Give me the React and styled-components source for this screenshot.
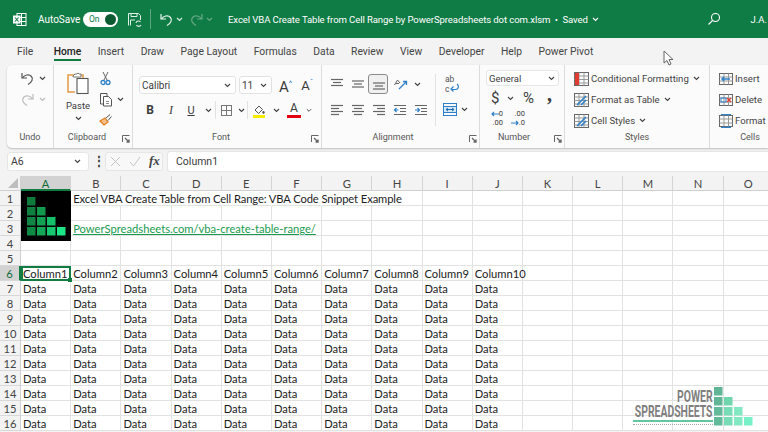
import React from 'react'
import styled, { createGlobalStyle } from 'styled-components'

const GlobalStyle = createGlobalStyle`
   html, body {
      margin: 0;
      background: #f3f3f3;
   }
`

const uiFont = `Roboto, "Open Sans", sans-serif`
const cellFont = `Lato, "Liberation Sans", sans-serif`

const columns = ['A', 'B', 'C', 'D', 'E', 'F', 'G', 'H', 'I', 'J', 'K', 'L', 'M', 'N', 'O']
const tabs = ['File', 'Home', 'Insert', 'Draw', 'Page Layout', 'Formulas', 'Data', 'Review', 'View', 'Developer', 'Help', 'Power Pivot']

const Icon = ({ w = 14, h = 14, children, stroke = '#555', ...rest }) => (
   <svg width={w} height={h} viewBox={`0 0 ${w} ${h}`} fill="none" stroke={stroke} strokeWidth="1" {...rest}>
      {children}
   </svg>
)

const Chevron = ({ color = '#444' }) => (
   <svg width="7" height="5" viewBox="0 0 7 5" fill="none" stroke={color} strokeWidth="1.1">
      <path d="M1 1l2.5 2.5L6 1" />
   </svg>
)

const Launcher = () => (
   <LauncherBox>
      <Icon w={8} h={8} stroke="#666">
         <path d="M.5 7V.5H7.5" />
         <path d="M3 3l4 4M7 4.5V7H4.5" strokeWidth="1.4" />
      </Icon>
   </LauncherBox>
)

const Undo = ({ color = '#555' }) => (
   <Icon w={15} h={15} stroke={color} strokeWidth="1.2">
      <path d="M2 2v5h5" />
      <path d="M2.5 7C4 4 9 2.5 11.5 5.5 13.5 8 12 11 8 13.5" />
   </Icon>
)

const Redo = ({ color = '#bbb' }) => (
   <Icon w={15} h={15} stroke={color} strokeWidth="1.2">
      <path d="M13 2v5H8" />
      <path d="M12.5 7C11 4 6 2.5 3.5 5.5 1.5 8 3 11 7 13.5" />
   </Icon>
)

const Lines = ({ pattern }) => (
   <Icon w={14} h={12} stroke="#666" strokeWidth="1.2">
      {pattern.map(([x1, x2, y]) => (
         <path key={y} d={`M${x1} ${y}H${x2}`} />
      ))}
   </Icon>
)

const ExcelLogo = () => (
   <Icon w={15} h={15} stroke="#fff">
      <rect x="5" y="1.5" width="9" height="12" />
      <path d="M5 5.5h9M5 9.5h9M9.5 1.5v12" />
      <rect x="1" y="3.5" width="7.5" height="8" fill="#fff" stroke="none" />
      <path d="M3 5.5l3.5 4M6.5 5.5L3 9.5" stroke="#107c41" strokeWidth="1.1" />
   </Icon>
)

const SaveIcon = () => (
   <Icon w={15} h={15} stroke="#dff0e6">
      <path d="M1.5 13.5v-12h10l2 2V8" />
      <path d="M4 1.5v3h6v-3M3.5 13.5V8H8" />
      <path d="M9 11a2.5 2.5 0 0 1 4.5-1M14 13a2.5 2.5 0 0 1-4.5 0" strokeWidth="1.1" />
   </Icon>
)

const PasteIcon = () => (
   <Icon w={24} h={25} stroke="#e59a45" strokeWidth="1.5">
      <path d="M8 4H2v17h7" />
      <path d="M15 4h2v3" />
      <path d="M7 5l2-2h1.5a2 2 0 0 1 3 0H15v3H7z" stroke="#777" strokeWidth="1" fill="#fff" />
      <rect x="11" y="7.5" width="11" height="15" fill="#fff" stroke="#555" strokeWidth="1.1" />
   </Icon>
)

const CutIcon = () => (
   <Icon w={11} h={15} stroke="#666">
      <path d="M3 1l4 8M8 1L4 9" />
      <circle cx="3" cy="11.5" r="2" stroke="#2f80c8" strokeWidth="1.3" />
      <circle cx="8" cy="11.5" r="2" stroke="#2f80c8" strokeWidth="1.3" />
   </Icon>
)

const CopyIcon = () => (
   <Icon w={14} h={15} stroke="#555">
      <path d="M5 12H1.5V1.5H8V4" />
      <path d="M4.5 4.5h5l3 3v6.5h-8z" fill="#fff" />
      <path d="M7 9.5h3M7 11.5h3" stroke="#888" />
   </Icon>
)

const BrushIcon = () => (
   <Icon w={14} h={13} stroke="#e07b1e">
      <path d="M1 8l5-3 3 4-4 3z" fill="#f4c18a" strokeWidth="1.2" />
      <path d="M7 5l4-3.5M9 7.5l3.5-4" stroke="#555" />
   </Icon>
)

const BorderIcon = () => (
   <Icon w={13} h={13} stroke="#777">
      <rect x="1.5" y="1.5" width="10" height="10" />
      <path d="M6.5 1.5v10M1.5 6.5h10" />
   </Icon>
)

const FillIcon = () => (
   <Icon w={14} h={15} stroke="#555">
      <path d="M3 7l4-4 3.5 3.5-4 4z" />
      <path d="M11.5 8c1 1.3 1 2.3 0 2.5-1-.2-1-1.2 0-2.5z" fill="#555" />
      <rect x="1" y="12" width="12" height="3" fill="#f5ec00" stroke="none" />
   </Icon>
)

const OrientIcon = () => (
   <Icon w={15} h={13} stroke="#666">
      <path d="M1.5 7l3-5 2.5 3M3 5.5h3" />
      <path d="M6 11l7-7M10 3.5h3.5V7" stroke="#2f80c8" strokeWidth="1.3" />
   </Icon>
)

const WrapIcon = () => (
   <WrapBox>
      <WrapLetters>ab</WrapLetters>
      <WrapLetters>c</WrapLetters>
      <WrapArrow>
         <Icon w={11} h={10} stroke="#2f80c8" strokeWidth="1.2">
            <path d="M8 1c2 1.5 2 5-1 5.500H2M4.500 3.500L2 6l2.500 2.500" />
         </Icon>
      </WrapArrow>
   </WrapBox>
)

const MergeIcon = () => (
   <Icon w={14} h={13} stroke="#2f80c8">
      <rect x=".5" y=".5" width="13" height="12" />
      <rect x=".5" y="3.500" width="13" height="6" fill="#d5e8f7" />
      <path d="M3 6.500h8M5 5l-2 1.500L5 8M9 5l2 1.500L9 8" stroke="#1f6fb5" />
   </Icon>
)

const IndentIcon = ({ flip }) => (
   <Icon w={14} h={12} stroke="#666" strokeWidth="1.2">
      <path d="M1 1.500h12M7 4.500h6M7 7.500h6M1 10.500h12" />
      <path d={flip ? 'M1 6h4M3.500 4L5.500 6l-2 2' : 'M5.500 6h-4M3.500 4L1.500 6l2 2'} stroke="#2f80c8" />
   </Icon>
)

const DecimalIcon = ({ more }) => (
   <DecimalBox>
      <DecimalLine>
         {!more && (
            <Icon w={8} h={6} stroke="#2f80c8" strokeWidth="1.2">
               <path d="M8 3H1M3 1L1 3l2 2" />
            </Icon>
         )}
         <DecimalText>{more ? '.00' : '0'}</DecimalText>
      </DecimalLine>
      <DecimalLine>
         {more && (
            <Icon w={8} h={6} stroke="#2f80c8" strokeWidth="1.2">
               <path d="M0 3h7M5 1l2 2-2 2" />
            </Icon>
         )}
         <DecimalText>{more ? '.0' : '.00'}</DecimalText>
      </DecimalLine>
   </DecimalBox>
)

const StyleIcon = ({ accent }) => (
   <Icon w={15} h={14} stroke="#666">
      <rect x=".5" y=".5" width="14" height="13" />
      <path d="M.5 4h14M.5 7.500h14M.5 11h14M5 .5v13M10 .5v13" stroke="#999" />
      {accent === 'red' && <rect x="1" y="1" width="4" height="12" fill="#e03c31" stroke="none" />}
      {accent === 'blue' && <path d="M3 12L12 3M7 12l5-5" stroke="#2f80c8" strokeWidth="1.6" />}
   </Icon>
)

const CellsIcon = ({ kind }) => (
   <Icon w={14} h={14} stroke="#666">
      <rect x=".5" y="1.500" width="13" height="11" />
      <path d="M.5 5h13M.5 9h13M5 1.500v11M9.500 1.500v11" stroke="#999" />
      {kind === 'insert' && <path d="M3 7h8M5 5L3 7l2 2" stroke="#2f80c8" strokeWidth="1.5" />}
      {kind === 'delete' && <path d="M8 5l4 4M12 5L8 9" stroke="#e03c31" strokeWidth="1.4" />}
      {kind === 'delete' && <rect x="2" y="5" width="5" height="4" stroke="#2f80c8" />}
      {kind === 'format' && <path d="M2 .5h10M2 13.500h10" stroke="#2f80c8" strokeWidth="1.4" />}
   </Icon>
)

const Cursor = () => (
   <CursorWrap>
      <svg width="11" height="16" viewBox="0 0 11 16" fill="#fff" stroke="#666" strokeWidth="1">
         <path d="M1 1v12l3-2.500 2 4.500 2-1-2-4.500h4z" />
      </svg>
   </CursorWrap>
)

const App = () => {
   const rows = Array.from({ length: 16 }, (_, i) => i + 1)

   const cellText = (row, colIndex) => {
      if (row === 6 && colIndex < 10) return `Column${colIndex + 1}`
      if (row > 6 && colIndex < 10) return 'Data'
      if (row === 1 && colIndex === 1) return <HeadingText>Excel VBA Create Table from Cell Range: VBA Code Snippet Example</HeadingText>
      if (row === 3 && colIndex === 1) return <LinkText>PowerSpreadsheets.com/vba-create-table-range/</LinkText>
      return null
   }

   // text that runs over into the next cells hides the grid line there
   const isCovered = (row, colIndex) => (row === 1 && colIndex > 0 && colIndex < 7) || (row === 3 && colIndex > 0 && colIndex < 5)

   return (
      <Page>
         <GlobalStyle />
         <TitleBar>
            <ExcelLogo />
            <AutoSave>AutoSave</AutoSave>
            <Toggle>
               On
               <Knob />
            </Toggle>
            <SaveIcon />
            <TitleDivider />
            <QuickGroup>
               <Undo color="#eaf5ee" />
               <Chevron color="#dff0e6" />
            </QuickGroup>
            <QuickGroup>
               <Redo color="#6aa987" />
               <Chevron color="#6aa987" />
            </QuickGroup>
            <DocTitle>
               Excel VBA Create Table from Cell Range by PowerSpreadsheets dot com.xlsm&nbsp; •&nbsp; Saved
               <Chevron color="#fff" />
            </DocTitle>
            <SearchWrap>
               <Icon w={14} h={14} stroke="#fff" strokeWidth="1.1">
                  <circle cx="8.500" cy="5.500" r="4" />
                  <path d="M5.500 8.500L1.500 12.500" />
               </Icon>
            </SearchWrap>
            <UserName>J.A.</UserName>
         </TitleBar>

         <TabRow>
            {tabs.map(tab => (
               <Tab key={tab} active={tab === 'Home'}>
                  {tab}
               </Tab>
            ))}
         </TabRow>

         <Ribbon>
            <Group width={47}>
               <GroupBody>
                  <UndoStack>
                     <IconRow>
                        <Undo />
                        <Chevron />
                     </IconRow>
                     <IconRow>
                        <Redo />
                        <Chevron color="#bbb" />
                     </IconRow>
                  </UndoStack>
               </GroupBody>
               <GroupLabel>Undo</GroupLabel>
            </Group>

            <Group width={79}>
               <GroupBody>
                  <ClipboardWrap>
                     <PasteButton>
                        <PasteIcon />
                        <PasteText>Paste</PasteText>
                        <Chevron />
                     </PasteButton>
                     <ClipStack>
                        <CutIcon />
                        <IconRow>
                           <CopyIcon />
                           <Chevron />
                        </IconRow>
                        <BrushIcon />
                     </ClipStack>
                  </ClipboardWrap>
               </GroupBody>
               <GroupLabel inset={12}>Clipboard</GroupLabel>
               <Launcher />
            </Group>

            <Group width={189}>
               <GroupBody>
                  <FontWrap>
                     <FontTop>
                        <SelectBox width={97}>
                           Calibri
                           <Chevron />
                        </SelectBox>
                        <SelectBox width={33}>
                           11
                           <Chevron />
                        </SelectBox>
                        <GrowA>
                           A<sup>^</sup>
                        </GrowA>
                        <ShrinkA>
                           A<sup>ˇ</sup>
                        </ShrinkA>
                     </FontTop>
                     <FontBottom>
                        <Slot width={22}>
                           <BoldB>B</BoldB>
                        </Slot>
                        <Slot width={20}>
                           <ItalicI>I</ItalicI>
                        </Slot>
                        <Slot width={20}>
                           <UnderU>U</UnderU>
                        </Slot>
                        <Slot width={14}>
                           <Chevron />
                        </Slot>
                        <SmallDivider />
                        <Slot width={20}>
                           <BorderIcon />
                        </Slot>
                        <Slot width={11}>
                           <Chevron />
                        </Slot>
                        <SmallDivider />
                        <Slot width={22}>
                           <FillIcon />
                        </Slot>
                        <Slot width={12}>
                           <Chevron />
                        </Slot>
                        <Slot width={24}>
                           <ColorA>
                              A
                              <ColorBar />
                           </ColorA>
                        </Slot>
                        <Slot width={6}>
                           <Chevron />
                        </Slot>
                     </FontBottom>
                  </FontWrap>
               </GroupBody>
               <GroupLabel inset={12}>Font</GroupLabel>
               <Launcher />
            </Group>

            <Group width={158}>
               <GroupBody>
                  <AlignWrap>
                     <AlignGrid>
                        <AlignCell>
                           <Lines pattern={[[1, 13, 1.5], [3, 11, 4.5], [1, 13, 7.5]]} />
                        </AlignCell>
                        <AlignCell>
                           <Lines pattern={[[1, 13, 3], [3, 11, 6], [1, 13, 9]]} />
                        </AlignCell>
                        <AlignCell selected>
                           <Lines pattern={[[1, 13, 5], [3, 11, 8], [1, 13, 11]]} />
                        </AlignCell>
                        <AlignCell>
                           <OrientIcon />
                        </AlignCell>
                        <AlignCell>
                           <Chevron />
                        </AlignCell>
                        <AlignCell>
                           <Lines pattern={[[1, 13, 1.5], [1, 9, 4.5], [1, 13, 7.5], [1, 9, 10.5]]} />
                        </AlignCell>
                        <AlignCell>
                           <Lines pattern={[[1, 13, 1.5], [3, 11, 4.5], [1, 13, 7.5], [3, 11, 10.5]]} />
                        </AlignCell>
                        <AlignCell>
                           <Lines pattern={[[1, 13, 1.5], [5, 13, 4.5], [1, 13, 7.5], [5, 13, 10.5]]} />
                        </AlignCell>
                        <AlignCell>
                           <IndentIcon />
                        </AlignCell>
                        <AlignCell>
                           <IndentIcon flip />
                        </AlignCell>
                     </AlignGrid>
                     <AlignDivider />
                     <WrapStack>
                        <WrapIcon />
                        <IconRow>
                           <MergeIcon />
                           <Chevron />
                        </IconRow>
                     </WrapStack>
                  </AlignWrap>
               </GroupBody>
               <GroupLabel inset={15}>Alignment</GroupLabel>
               <Launcher />
            </Group>

            <Group width={85}>
               <GroupBody>
                  <NumberWrap>
                     <NumberSelect>
                        General
                        <Chevron />
                     </NumberSelect>
                     <NumberRow>
                        <Dollar>$</Dollar>
                        <Chevron />
                        <Percent>%</Percent>
                        <Comma>,</Comma>
                     </NumberRow>
                     <DecimalRow>
                        <DecimalIcon />
                        <DecimalIcon more />
                     </DecimalRow>
                  </NumberWrap>
               </GroupBody>
               <GroupLabel inset={16}>Number</GroupLabel>
               <Launcher />
            </Group>

            <Group width={145}>
               <GroupBody>
                  <ListStack>
                     <ListItem>
                        <StyleIcon accent="red" />
                        Conditional Formatting
                        <Chevron />
                     </ListItem>
                     <ListItem>
                        <StyleIcon accent="blue" />
                        Format as Table
                        <Chevron />
                     </ListItem>
                     <ListItem>
                        <StyleIcon accent="blue" />
                        Cell Styles
                        <Chevron />
                     </ListItem>
                  </ListStack>
               </GroupBody>
               <GroupLabel>Styles</GroupLabel>
            </Group>

            <Group width={80} last>
               <GroupBody>
                  <ListStack>
                     <ListItem>
                        <CellsIcon kind="insert" />
                        Insert
                     </ListItem>
                     <ListItem>
                        <CellsIcon kind="delete" />
                        Delete
                     </ListItem>
                     <ListItem>
                        <CellsIcon kind="format" />
                        Format
                     </ListItem>
                  </ListStack>
               </GroupBody>
               <GroupLabel>Cells</GroupLabel>
            </Group>
         </Ribbon>

         <FormulaBar>
            <NameBox>
               A6
               <Chevron />
            </NameBox>
            <Dots>⋮</Dots>
            <FormulaButtons>
               <Icon w={11} h={11} stroke="#c4c4c4">
                  <path d="M1 1l9 9M10 1l-9 9" />
               </Icon>
               <Icon w={12} h={11} stroke="#c4c4c4">
                  <path d="M1 6l3.500 4L11 1" />
               </Icon>
               <Fx>fx</Fx>
            </FormulaButtons>
            <FormulaInput>Column1</FormulaInput>
         </FormulaBar>

         <Sheet>
            <Corner>
               <CornerMark />
            </Corner>
            {columns.map((col, i) => (
               <ColHead key={col} active={i === 0}>
                  {col}
               </ColHead>
            ))}
            {rows.map(row => (
               <React.Fragment key={row}>
                  <RowHead active={row === 6}>{row}</RowHead>
                  {columns.map((col, i) => (
                     <Cell key={col} selected={row === 6 && i === 0} hideRight={isCovered(row, i)}>
                        {cellText(row, i)}
                     </Cell>
                  ))}
               </React.Fragment>
            ))}
            <SheetLogo>
               <svg width="50" height="50" viewBox="0 0 50 50">
                  <rect width="50" height="50" fill="#000" />
                  {[
                     [6, 6, '#0e7a3c'],
                     [6, 16, '#0e7f3f'],
                     [6, 26, '#0f8643'],
                     [6, 36, '#0f8a45'],
                     [16, 16, '#11994d'],
                     [16, 26, '#12a254'],
                     [16, 36, '#12a858'],
                     [26, 26, '#15c06a'],
                     [26, 36, '#16c870'],
                     [36, 36, '#1be585']
                  ].map(([x, y, fill]) => (
                     <rect key={`${x}-${y}`} x={x} y={y} width="8.500" height="8.500" fill={fill} />
                  ))}
               </svg>
            </SheetLogo>
         </Sheet>

         <Watermark>
            <MarkText>
               <MarkWord>POWER</MarkWord>
               <MarkWord>SPREADSHEETS</MarkWord>
               <MarkLine />
               <MarkDots />
            </MarkText>
            <svg width="40" height="39" viewBox="0 0 40 39">
               {[
                  [0, 0, '#5fb596'],
                  [0, 10, '#5fb596'],
                  [0, 20, '#62ba9a'],
                  [0, 30, '#62ba9a'],
                  [10, 10, '#6fd6ae'],
                  [10, 20, '#78dcb6'],
                  [10, 30, '#78dcb6'],
                  [20, 20, '#84e8c2'],
                  [20, 30, '#84e8c2'],
                  [30, 30, '#78f0c8']
               ].map(([x, y, fill]) => (
                  <rect key={`${x}-${y}`} x={x} y={y} width="8.500" height="8.500" fill={fill} />
               ))}
            </svg>
         </Watermark>

         <Cursor />
      </Page>
   )
}

export default App

const Page = styled.div`
   position: relative;
   width: 768px;
   height: 432px;
   overflow: hidden;
   background: #f3f3f3;
   font-family: ${uiFont};
   color: #3c3c3c;
`

const TitleBar = styled.div`
   display: flex;
   align-items: center;
   height: 38px;
   padding-left: 12px;
   box-sizing: border-box;
   background: #0f7b45;
   color: #fff;
   font-size: 10px;
`

const AutoSave = styled.span`
   width: 41px;
   margin: 0 4px 0 11px;
   white-space: nowrap;
`

const Toggle = styled.div`
   position: relative;
   flex: none;
   box-sizing: border-box;
   width: 35px;
   height: 15px;
   margin-right: 9px;
   padding-left: 6px;
   border-radius: 8px;
   background: #fff;
   color: #0f7b45;
   font-size: 8.5px;
   line-height: 15px;
`

const Knob = styled.span`
   position: absolute;
   top: 2px;
   right: 2px;
   width: 11px;
   height: 11px;
   border-radius: 50%;
   background: #0b5a32;
`

const TitleDivider = styled.div`
   width: 1px;
   height: 20px;
   margin: 0 8px;
   background: #5ea582;
`

const QuickGroup = styled.div`
   display: flex;
   align-items: center;
   gap: 2px;
   margin-right: 6px;
`

const DocTitle = styled.div`
   display: flex;
   align-items: center;
   gap: 4px;
   margin-left: 9px;
   white-space: nowrap;
   font-size: 9.6px;
   letter-spacing: -0.11px;
`

const SearchWrap = styled.div`
   display: flex;
   margin-left: auto;
`

const UserName = styled.div`
   margin: 0 1px 0 30px;
   white-space: nowrap;
   font-size: 9.5px;
`

const TabRow = styled.div`
   display: flex;
   gap: 16.5px;
   height: 27px;
   padding-left: 17px;
   box-sizing: border-box;
   align-items: center;
   font-size: 10.3px;
   white-space: nowrap;
`

const Tab = styled.div`
   position: relative;
   margin-left: ${({ active }) => (active ? 4 : 0)}px;
   font-weight: ${({ active }) => (active ? 500 : 400)};
   color: ${({ active }) => (active ? '#222' : '#444')};
   &::after {
      content: '';
      display: ${({ active }) => (active ? 'block' : 'none')};
      position: absolute;
      left: 0;
      right: 0;
      bottom: -3px;
      height: 2px;
      background: #107c41;
   }
`

const Ribbon = styled.div`
   display: flex;
   height: 83px;
   margin-left: 7px;
   background: #fbfbfb;
   border-radius: 5px 0 0 5px;
   box-shadow: 0 1px 2px rgba(0, 0, 0, 0.22);
`

const Group = styled.div`
   position: relative;
   flex: none;
   display: flex;
   flex-direction: column;
   box-sizing: border-box;
   width: ${({ width }) => width}px;
   padding: 3px 0 4px;
   border-right: ${({ last }) => (last ? 'none' : '1px solid #dcdcdc')};
`

const GroupBody = styled.div`
   flex: 1;
   min-height: 0;
`

const GroupLabel = styled.div`
   padding-right: ${({ inset }) => inset || 0}px;
   text-align: center;
   font-size: 9px;
   line-height: 13px;
   color: #555;
`

const LauncherBox = styled.div`
   position: absolute;
   right: 2px;
   bottom: 5px;
   display: flex;
`

const IconRow = styled.div`
   display: flex;
   align-items: center;
   gap: 4px;
`

const UndoStack = styled.div`
   display: flex;
   flex-direction: column;
   gap: 6px;
   padding: 3px 0 0 13px;
`

const ClipboardWrap = styled.div`
   display: flex;
   padding: 3px 0 0 7px;
`

const PasteButton = styled.div`
   display: flex;
   flex-direction: column;
   align-items: center;
   width: 34px;
`

const PasteText = styled.div`
   margin: 4px 0 4px;
   font-size: 9.5px;
   line-height: 12px;
`

const ClipStack = styled.div`
   display: flex;
   flex-direction: column;
   align-items: flex-start;
   gap: 6px;
   padding-left: 4px;
   > svg:first-child {
      margin-left: 1px;
   }
`

const FontWrap = styled.div`
   display: flex;
   flex-direction: column;
   gap: 7px;
   padding: 8px 0 0 6px;
`

const FontTop = styled.div`
   display: flex;
   align-items: center;
   gap: 3px;
`

const SelectBox = styled.div`
   display: flex;
   align-items: center;
   justify-content: space-between;
   box-sizing: border-box;
   width: ${({ width }) => width}px;
   height: 18px;
   padding: 0 4px 0 2px;
   background: #fff;
   border: 1px solid #e2e2e2;
   border-radius: 3px;
   font-size: 10px;
`

const GrowA = styled.div`
   margin-left: 4px;
   font-size: 15px;
   line-height: 14px;
   sup {
      color: #2f80c8;
      font-size: 8px;
   }
`

const ShrinkA = styled.div`
   margin-left: 6px;
   font-size: 13px;
   line-height: 14px;
   sup {
      color: #2f80c8;
      font-size: 8px;
   }
`

const FontBottom = styled.div`
   display: flex;
   align-items: center;
   height: 18px;
`

const Slot = styled.div`
   flex: none;
   display: flex;
   justify-content: center;
   align-items: center;
   width: ${({ width }) => width}px;
`

const BoldB = styled.span`
   font-size: 12px;
   font-weight: 700;
`

const ItalicI = styled.span`
   font-family: "Liberation Serif", serif;
   font-size: 12px;
   font-style: italic;
`

const UnderU = styled.span`
   font-size: 11px;
   text-decoration: underline;
`

const SmallDivider = styled.div`
   flex: none;
   width: 1px;
   height: 18px;
   background: #e2e2e2;
`

const AlignDivider = styled.div`
   flex: none;
   width: 1px;
   height: 52px;
   margin-left: 14px;
   background: #e2e2e2;
`

const ColorA = styled.div`
   position: relative;
   width: 14px;
   height: 16px;
   text-align: center;
   font-size: 12px;
   line-height: 13px;
`

const ColorBar = styled.div`
   position: absolute;
   left: 0;
   right: 0;
   bottom: 0;
   height: 3px;
   background: #e3000f;
`

const AlignWrap = styled.div`
   display: flex;
   padding: 6px 0 0 4px;
`

const AlignGrid = styled.div`
   display: grid;
   grid-template-columns: repeat(4, 21px) 11px;
   grid-template-rows: 20px 20px;
   row-gap: 6px;
`

const AlignCell = styled.div`
   display: flex;
   align-items: center;
   justify-content: flex-start;
   box-sizing: border-box;
   width: 20px;
   height: 20px;
   padding-left: 3px;
   border: 1px solid ${({ selected }) => (selected ? '#8a8a8a' : 'transparent')};
   border-radius: 3px;
   background: ${({ selected }) => (selected ? '#f0f0f0' : 'transparent')};
`

const WrapStack = styled.div`
   display: flex;
   flex-direction: column;
   gap: 5px;
   padding: 0 0 0 7px;
`

const WrapBox = styled.div`
   position: relative;
   display: flex;
   flex-direction: column;
   height: 24px;
   padding-left: 2px;
   color: #555;
`

const WrapLetters = styled.span`
   font-size: 8.5px;
   line-height: 10px;
   height: 10px;
`

const WrapArrow = styled.div`
   position: absolute;
   left: 6px;
   top: 9px;
   display: flex;
`

const NumberWrap = styled.div`
   display: flex;
   flex-direction: column;
   padding: 2px 0 0 6px;
`

const NumberSelect = styled.div`
   display: flex;
   align-items: center;
   justify-content: space-between;
   box-sizing: border-box;
   width: 73px;
   height: 16px;
   padding: 0 3px 0 2px;
   background: #fff;
   border: 1px solid #e6e6e6;
   border-radius: 3px;
   font-size: 9.5px;
`

const NumberRow = styled.div`
   display: flex;
   align-items: center;
   height: 22px;
   padding-left: 5px;
   margin-top: 1px;
`

const Dollar = styled.span`
   width: 13px;
   margin-right: 3px;
   font-size: 15px;
`

const Percent = styled.span`
   margin-left: 9px;
   font-size: 15px;
`

const Comma = styled.span`
   margin: 0 0 8px 13px;
   font-family: "Liberation Serif", serif;
   font-size: 20px;
   font-weight: 700;
   line-height: 10px;
`

const DecimalRow = styled.div`
   display: flex;
   gap: 7px;
   padding-left: 2px;
`

const DecimalBox = styled.div`
   display: flex;
   flex-direction: column;
   align-items: flex-end;
   width: 15px;
`

const DecimalLine = styled.div`
   display: flex;
   align-items: center;
   height: 9px;
`

const DecimalText = styled.span`
   font-size: 7.5px;
   line-height: 9px;
`

const ListStack = styled.div`
   display: flex;
   flex-direction: column;
   gap: 6px;
   padding: 3px 0 0 9px;
`

const ListItem = styled.div`
   display: flex;
   align-items: center;
   gap: 2px;
   height: 15px;
   font-size: 9.6px;
   white-space: nowrap;
   color: #444;
   > svg + svg {
      margin-left: 2px;
   }
`

const FormulaBar = styled.div`
   display: flex;
   align-items: center;
   gap: 4px;
   height: 28px;
   padding: 2px 0 4px 7px;
   box-sizing: border-box;
`

const NameBox = styled.div`
   display: flex;
   align-items: center;
   justify-content: space-between;
   box-sizing: border-box;
   width: 82px;
   height: 19px;
   padding: 0 7px 0 3px;
   background: #fff;
   border: 1px solid #e6e6e6;
   border-radius: 3px;
   font-size: 10.5px;
`

const Dots = styled.div`
   width: 8px;
   text-align: center;
   font-size: 12px;
   font-weight: 700;
`

const FormulaButtons = styled.div`
   display: flex;
   align-items: center;
   gap: 8px;
   box-sizing: border-box;
   width: 58px;
   height: 19px;
   padding-left: 4px;
   background: #f8f8f8;
   border: 1px solid #e6e6e6;
   border-radius: 3px;
`

const Fx = styled.span`
   font-family: "Liberation Serif", serif;
   font-size: 13px;
   font-style: italic;
   font-weight: 700;
   color: #444;
`

const FormulaInput = styled.div`
   flex: 1;
   height: 19px;
   padding-left: 8px;
   background: #fff;
   border: 1px solid #e6e6e6;
   border-right: none;
   border-radius: 3px 0 0 3px;
   font-size: 10.5px;
   line-height: 19px;
`

const Sheet = styled.div`
   position: relative;
   display: grid;
   grid-template-columns: 21px repeat(15, 50.2px);
   grid-auto-rows: 15px;
   background: #fff;
   font-family: ${cellFont};
   font-size: 11.2px;
`

const Corner = styled.div`
   position: relative;
   background: #f3f3f3;
   border-right: 1px solid #d0d0d0;
   border-bottom: 1px solid #d0d0d0;
`

const CornerMark = styled.div`
   position: absolute;
   right: 2px;
   bottom: 2px;
   width: 0;
   height: 0;
   border-left: 10px solid transparent;
   border-bottom: 10px solid #bdbdbd;
`

const ColHead = styled.div`
   box-sizing: border-box;
   text-align: center;
   line-height: 15px;
   background: ${({ active }) => (active ? '#d2d2d2' : '#f3f3f3')};
   color: ${({ active }) => (active ? '#0f6a38' : '#444')};
   border-right: 1px solid #d4d4d4;
   border-bottom: ${({ active }) => (active ? '2px solid #107c41' : '1px solid #d0d0d0')};
`

const RowHead = styled.div`
   box-sizing: border-box;
   text-align: center;
   line-height: 15px;
   background: ${({ active }) => (active ? '#d2d2d2' : '#f3f3f3')};
   color: ${({ active }) => (active ? '#0f6a38' : '#444')};
   border-right: ${({ active }) => (active ? '2px solid #107c41' : '1px solid #d0d0d0')};
   border-bottom: 1px solid #d8d8d8;
`

const Cell = styled.div`
   position: relative;
   box-sizing: border-box;
   padding-left: 2px;
   white-space: nowrap;
   line-height: 15px;
   color: #1c1c1c;
   border-right: 1px solid ${({ hideRight }) => (hideRight ? 'transparent' : '#e2e2e2')};
   border-bottom: 1px solid #e2e2e2;
   ${({ selected }) =>
      selected &&
      `
      outline: 2px solid #107c41;
      outline-offset: -2px;
      z-index: 1;
      &::after {
         content: '';
         position: absolute;
         right: -2px;
         bottom: -2px;
         width: 4px;
         height: 4px;
         background: #107c41;
      }
   `}
`

const HeadingText = styled.span`
   letter-spacing: -0.1px;
`

const LinkText = styled.span`
   color: #1a9a50;
   text-decoration: underline;
`

const SheetLogo = styled.div`
   position: absolute;
   left: 21px;
   top: 15px;
   display: flex;
   z-index: 2;
`

const Watermark = styled.div`
   position: absolute;
   right: 14px;
   top: 387px;
   display: flex;
   align-items: flex-start;
   gap: 1px;
`

const MarkText = styled.div`
   display: flex;
   flex-direction: column;
   align-items: flex-end;
   width: 80px;
   padding-top: 3px;
   color: #808080;
   font-family: Roboto, "Liberation Sans", sans-serif;
   font-weight: 700;
`

const MarkWord = styled.div`
   font-size: 16px;
   line-height: 14.5px;
   white-space: nowrap;
   transform: scaleX(0.65);
   transform-origin: right;
`

const MarkLine = styled.div`
   align-self: stretch;
   height: 2px;
   margin-top: 1px;
   background: #62c6a0;
`

const MarkDots = styled.div`
   align-self: stretch;
   height: 0;
   margin-top: 2px;
   border-top: 1px dotted #a8a8a8;
`

const CursorWrap = styled.div`
   position: absolute;
   left: 663px;
   top: 50px;
   display: flex;
`
